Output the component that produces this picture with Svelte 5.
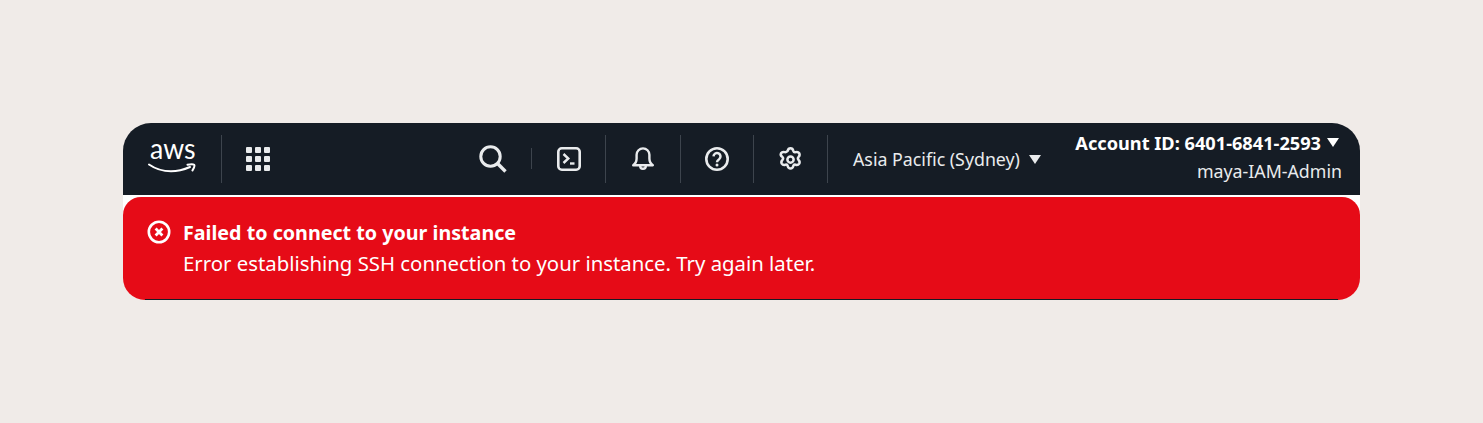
<script>
  const regionLabel = 'Asia Pacific (Sydney)';
  const accountId = '6401-6841-2593';
  const userName = 'maya-IAM-Admin';
</script>

<div class="page">
  <div class="card">
    <header class="nav">
      <a class="logo" href="#top" aria-label="AWS">
        <span class="logo-text">aws</span>
        <svg class="smile" viewBox="0 0 48 12" width="48" height="12" aria-hidden="true">
          <path d="M1 1.500C7.500 6 15 8.300 23 8.300c6.500 0 12.500-1.500 19-4.300" fill="none" stroke="#fff" stroke-width="2" stroke-linecap="round" />
          <path d="M39.500 1.800c2.200-.5 5.700-.7 6.700 0 .6.800-.4 3.600-1.700 5.600" fill="none" stroke="#fff" stroke-width="2" stroke-linecap="round" />
        </svg>
      </a>
      <div class="apps">
        <div class="grid" aria-hidden="true">
          {#each Array(9) as _}<span></span>{/each}
        </div>
      </div>

      <div class="tools">
        <div class="tool search">
          <svg viewBox="0 0 28 28" width="28" height="28" aria-hidden="true">
            <circle cx="11.500" cy="11.500" r="9.700" fill="none" stroke="#e9ebed" stroke-width="3" />
            <path d="M18.300 18.300 26.500 26.500" stroke="#e9ebed" stroke-width="3.400" />
          </svg>
        </div>
        <div class="tool console">
          <svg viewBox="0 0 24 24" width="24" height="24" aria-hidden="true">
            <rect x="1.300" y="1.300" width="21.400" height="21.400" rx="3.500" fill="none" stroke="#e9ebed" stroke-width="2.600" />
            <path d="m6.500 7 4.800 4.500-4.800 4.500" fill="none" stroke="#e9ebed" stroke-width="2.400" />
            <path d="M13 16.500h4.500" stroke="#e9ebed" stroke-width="2.400" />
          </svg>
        </div>
        <div class="tool bell">
          <svg viewBox="0 0 22 24" width="22" height="24" aria-hidden="true">
            <path d="M1.200 18.200c2.400-1.600 3.400-3.600 3.400-6.600V7.800a6.400 6.400 0 0 1 12.800 0v3.800c0 3 1 5 3.400 6.600z" fill="none" stroke="#e9ebed" stroke-width="2.400" stroke-linejoin="round" />
            <path d="M8.200 19a2.800 2.800 0 0 0 5.600 0" fill="none" stroke="#e9ebed" stroke-width="2.400" />
          </svg>
        </div>
        <div class="tool help">
          <svg viewBox="0 0 24 24" width="24" height="24" aria-hidden="true">
            <circle cx="12" cy="12" r="10.700" fill="none" stroke="#e9ebed" stroke-width="2.600" />
            <path d="M8.500 9.400a3.500 3.500 0 1 1 5.600 2.900c-1.300.9-2.100 1.500-2.100 3" fill="none" stroke="#e9ebed" stroke-width="2.500" />
            <circle cx="12" cy="18" r="1.500" fill="#e9ebed" />
          </svg>
        </div>
        <div class="tool gear">
          <svg viewBox="0 0 24 24" width="25" height="25" aria-hidden="true">
            <path d="M9.300 3.700C9.700 2 10.700 1.300 12 1.300s2.300.7 2.700 2.400c.3 1 1.200 1.500 2.200 1.200 1.700-.5 2.800 0 3.500 1.100.6 1.100.5 2.300-.7 3.600-.7.8-.7 1.900 0 2.700 1.200 1.300 1.300 2.500.7 3.600-.7 1.100-1.800 1.600-3.500 1.100-1-.3-1.900.2-2.200 1.200-.4 1.700-1.400 2.400-2.700 2.400s-2.300-.7-2.700-2.400c-.3-1-1.200-1.500-2.200-1.200-1.700.5-2.800 0-3.500-1.100-.6-1.100-.5-2.300.7-3.600.7-.8.7-1.900 0-2.700C2.400 8.300 2.300 7.100 2.900 6c.7-1.100 1.800-1.600 3.500-1.100 1 .3 1.900-.2 2.900-1.200z" fill="none" stroke="#e9ebed" stroke-width="2.400" stroke-linejoin="round" />
            <circle cx="12" cy="12" r="3" fill="none" stroke="#e9ebed" stroke-width="2.400" />
          </svg>
        </div>
        <div class="region">
          <span>{regionLabel}</span>
          <span class="caret"></span>
        </div>
      </div>

      <div class="account">
        <div class="account-id">
          <span>Account ID: {accountId}</span>
          <span class="caret small"></span>
        </div>
        <div class="user">{userName}</div>
      </div>
    </header>

    <div class="alert-wrap">
      <div class="alert">
        <svg class="alert-icon" viewBox="0 0 24 24" width="24" height="24" aria-hidden="true">
          <circle cx="12" cy="12" r="10.200" fill="none" stroke="#fff" stroke-width="2.600" />
          <path d="m8.600 8.600 6.800 6.800M15.400 8.600l-6.800 6.800" stroke="#fff" stroke-width="2.800" />
        </svg>
        <div class="alert-body">
          <div class="alert-title">Failed to connect to your instance</div>
          <div class="alert-text">Error establishing SSH connection to your instance. Try again later.</div>
        </div>
      </div>
    </div>
  </div>
</div>

<style>
  :global(body) {
    margin: 0;
    background: #f0ebe8;
  }
  .page {
    height: 423px;
    padding: 123px 123px 0;
    box-sizing: border-box;
    font-family: "Noto Sans", "Open Sans", sans-serif;
  }
  .card {
    width: 1237px;
    height: 177px;
  }
  .nav {
    height: 72px;
    background: #151c25;
    border-radius: 28px 28px 0 0;
    display: flex;
    align-items: center;
    color: #e9ebed;
  }
  .logo {
    width: 99px;
    height: 48px;
    flex: none;
    box-sizing: border-box;
    border-right: 1px solid #3d444d;
    display: flex;
    flex-direction: column;
    align-items: flex-start;
    padding-left: 25px;
    text-decoration: none;
  }
  .logo-text {
    display: inline-block;
    font-family: "Lato", sans-serif;
    font-weight: 400;
    font-size: 29px;
    line-height: 26px;
    color: #fff;
    margin-left: 2px;
    transform: scaleX(0.92);
    transform-origin: left center;
  }
  .smile {
    margin-top: 2px;
  }
  .apps {
    flex: none;
    padding-left: 24px;
  }
  .grid {
    display: grid;
    grid-template-columns: repeat(3, 6px);
    grid-auto-rows: 6px;
    gap: 3px;
  }
  .grid span {
    background: #e9ebed;
    border-radius: 1px;
  }
  .tools {
    flex: 1;
    display: flex;
    align-items: center;
    height: 48px;
    padding-left: 209px;
  }
  .tool {
    height: 48px;
    box-sizing: border-box;
    border-left: 1px solid #3d444d;
    display: flex;
    align-items: center;
    justify-content: center;
    flex: none;
  }
  .tool.search {
    width: 53px;
    border-left: 0;
    justify-content: flex-start;
    position: relative;
  }
  .tool.search::after {
    content: "";
    position: absolute;
    right: 0;
    top: 13px;
    height: 21px;
    border-right: 1px solid #3d444d;
  }
  .tool.console {
    width: 73px;
    border-left: 0;
  }
  .tool.bell {
    width: 75px;
  }
  .tool.help {
    width: 73px;
  }
  .tool.gear {
    width: 74px;
  }
  .region {
    flex: none;
    height: 48px;
    box-sizing: border-box;
    border-left: 1px solid #3d444d;
    padding-left: 25px;
    display: flex;
    align-items: center;
    gap: 9px;
    font-size: 17.800px;
    white-space: nowrap;
  }
  .caret {
    display: inline-block;
    width: 0;
    height: 0;
    border-left: 6.500px solid transparent;
    border-right: 6.500px solid transparent;
    border-top: 9px solid #e9ebed;
    flex: none;
  }
  .caret.small {
    border-top-color: #fff;
  }
  .account {
    flex: none;
    width: 284px;
    padding-right: 18px;
    box-sizing: border-box;
    display: flex;
    flex-direction: column;
    align-items: flex-end;
    gap: 6px;
    margin-top: -5px;
    white-space: nowrap;
  }
  .account-id {
    display: flex;
    align-items: center;
    gap: 6px;
    margin-right: 3px;
    font-size: 18.200px;
    font-weight: 700;
    color: #fff;
    line-height: 22px;
  }
  .user {
    font-size: 17.800px;
    line-height: 22px;
  }
  .alert-wrap {
    position: relative;
    padding-top: 2px;
    background: linear-gradient(#fff 50%, transparent 50%);
  }
  .alert-wrap::after {
    content: "";
    position: absolute;
    left: 22px;
    right: 22px;
    bottom: 0;
    height: 1px;
    background: #151c25;
  }
  .alert {
    height: 103px;
    box-sizing: border-box;
    background: #e60b17;
    border-radius: 18px 18px 22px 22px;
    padding: 21px 24px;
    display: flex;
    gap: 12px;
    color: #fff;
  }
  .alert-icon {
    flex: none;
    margin-top: 2px;
  }
  .alert-title {
    font-size: 19.700px;
    font-weight: 700;
    line-height: 29px;
  }
  .alert-text {
    font-size: 20.350px;
    line-height: 31px;
    margin-top: 1px;
  }
</style>
